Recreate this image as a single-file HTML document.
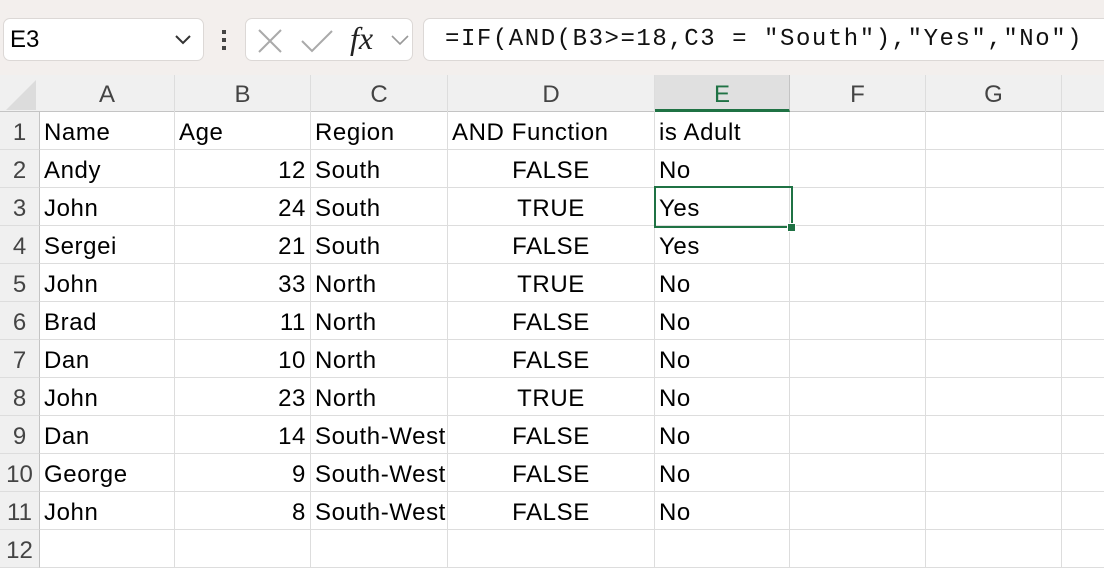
<!DOCTYPE html><html><head><style>
body{margin:0;width:1104px;height:548px;overflow:hidden;background:#fff;font-family:"Liberation Sans",sans-serif;position:relative}
.top{position:absolute;left:0;top:0;width:1104px;height:75px;background:#f3efed}
.box{position:absolute;background:#fff;border:1px solid #dcd8d6;border-radius:7px;box-sizing:border-box}
.hdr{position:absolute;top:75px;height:37px;background:#f0f0f0;border-bottom:1px solid #c4c4c4;box-sizing:border-box}
.ch{position:absolute;top:75px;height:37px;line-height:40px;text-align:center;font-size:24px;color:#444;border-right:1px solid #ddd;box-sizing:border-box}
.rh{position:absolute;left:0;width:40px;height:38px;background:#f0f0f0;border-right:1px solid #c4c4c4;border-bottom:1px solid #ddd;box-sizing:border-box;text-align:center;font-size:24px;line-height:41px;color:#444}
.c{position:absolute;height:38px;border-right:1px solid #ddd;border-bottom:1px solid #ddd;box-sizing:border-box;font-size:24px;letter-spacing:0.6px;line-height:41px;padding:0 4px;white-space:nowrap;overflow:hidden;color:#000}
.r{text-align:right}.m{text-align:center}
</style></head><body>
<div class="top"></div>
<div class="box" style="left:3px;top:18px;width:201px;height:43px"><span style="position:absolute;left:6px;top:7px;font-size:24px">E3</span>
<svg style="position:absolute;left:170px;top:15px" width="18" height="12"><path d="M2 2 L9 9 L16 2" stroke="#333" stroke-width="2" fill="none"/></svg></div>
<div style="position:absolute;left:222px;top:30px;width:4px;height:4px;background:#444"></div>
<div style="position:absolute;left:222px;top:38px;width:4px;height:4px;background:#444"></div>
<div style="position:absolute;left:222px;top:46px;width:4px;height:4px;background:#444"></div>
<div class="box" style="left:245px;top:18px;width:168px;height:43px">
<svg style="position:absolute;left:10px;top:9px" width="30" height="26"><path d="M3 2 L25 24 M25 2 L3 24" stroke="#aaa" stroke-width="2"/></svg>
<svg style="position:absolute;left:54px;top:9px" width="34" height="26"><path d="M2 13 L12 23 L32 3" stroke="#aaa" stroke-width="2" fill="none"/></svg>
<span style="position:absolute;left:104px;top:1px;font-family:'Liberation Serif',serif;font-style:italic;font-size:32px;color:#222">fx</span>
<svg style="position:absolute;left:144px;top:15px" width="20" height="12"><path d="M2 2 L10 10 L18 2" stroke="#999" stroke-width="1.6" fill="none"/></svg></div>
<div class="box" style="left:423px;top:18px;width:690px;height:43px"><span style="position:absolute;left:21px;top:7px;font-family:'Liberation Mono',monospace;font-size:24px;letter-spacing:1.55px;color:#111">=IF(AND(B3&gt;=18,C3 = "South"),"Yes","No")</span></div>
<div class="hdr" style="left:0;width:1104px"></div>
<svg style="position:absolute;left:6px;top:80px" width="30" height="30"><path d="M30 0 L30 30 L0 30Z" fill="#dcdcdc"/></svg>
<div class="ch" style="left:40px;width:135px">A</div>
<div class="ch" style="left:175px;width:136px">B</div>
<div class="ch" style="left:311px;width:137px">C</div>
<div class="ch" style="left:448px;width:207px">D</div>
<div class="ch" style="left:655px;width:135px;background:#e0e0e0;color:#1f7244;border-bottom:3px solid #1f7244;border-right:1px solid #c4c4c4">E</div>
<div class="ch" style="left:790px;width:136px">F</div>
<div class="ch" style="left:926px;width:136px">G</div>
<div id="g"></div>
<script>
var d=[["Name","Age","Region","AND Function","is Adult"],["Andy",12,"South","FALSE","No"],["John",24,"South","TRUE","Yes"],["Sergei",21,"South","FALSE","Yes"],["John",33,"North","TRUE","No"],["Brad",11,"North","FALSE","No"],["Dan",10,"North","FALSE","No"],["John",23,"North","TRUE","No"],["Dan",14,"South-West","FALSE","No"],["George",9,"South-West","FALSE","No"],["John",8,"South-West","FALSE","No"],["","","","",""]];
var xs=[40,175,311,448,655,790,926,1062,1200],h="";
for(var i=0;i<12;i++){var y=112+i*38;h+='<div class="rh" style="top:'+y+'px">'+(i+1)+'</div>';
for(var j=0;j<8;j++){var t=j<5?d[i][j]:"",cl="c";if(i>0&&j==1)cl+=" r";if(i>0&&j==3)cl+=" m";
h+='<div class="'+cl+'" style="left:'+xs[j]+'px;top:'+y+'px;width:'+(xs[j+1]-xs[j])+'px">'+t+'</div>';}}
h+='<div style="position:absolute;left:654px;top:186px;width:139px;height:42px;border:2px solid #1f7244;box-sizing:border-box"></div><div style="position:absolute;left:787px;top:223px;width:7px;height:7px;background:#1f7244;border:1px solid #fff"></div>';
document.getElementById("g").innerHTML=h;
</script>
</body></html>
